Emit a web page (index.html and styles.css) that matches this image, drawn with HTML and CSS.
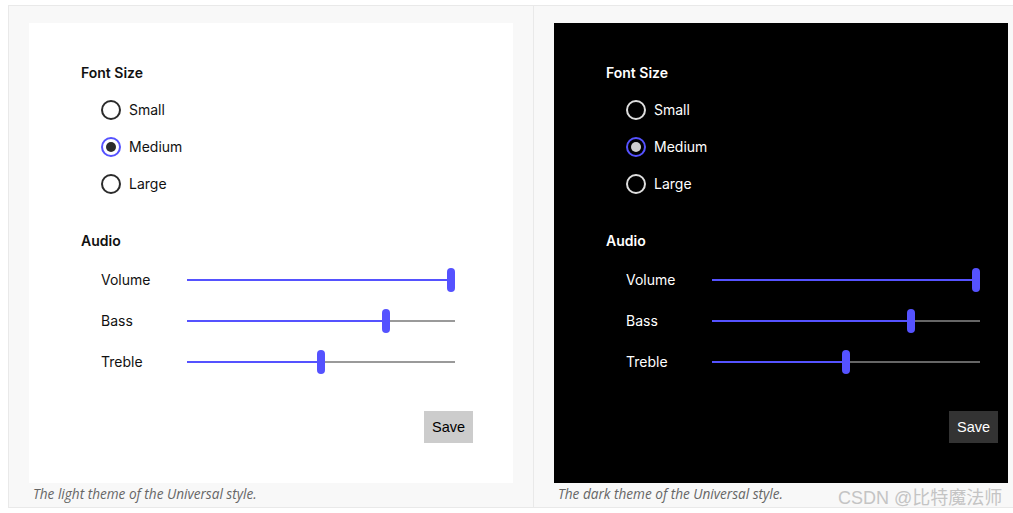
FILE: index.html
```html
<!DOCTYPE html>
<html>
<head>
<meta charset="utf-8">
<link rel="stylesheet" href="styles.css">
</head>
<body>
<div class="figure">
  <div class="col col-light">
    <div class="panel light">
      <div class="heading">Font Size</div>
      <div class="radios">
        <div class="radio-row"><span class="radio"></span><span class="lbl">Small</span></div>
        <div class="radio-row"><span class="radio checked"></span><span class="lbl">Medium</span></div>
        <div class="radio-row"><span class="radio"></span><span class="lbl">Large</span></div>
      </div>
      <div class="heading audio">Audio</div>
      <div class="sliders">
        <div class="slider-row"><span class="slabel">Volume</span><div class="track"><div class="fill" style="width:100%"></div><div class="handle" style="left:260px"></div></div></div>
        <div class="slider-row"><span class="slabel">Bass</span><div class="track"><div class="fill" style="width:75%"></div><div class="handle" style="left:195px"></div></div></div>
        <div class="slider-row"><span class="slabel">Treble</span><div class="track"><div class="fill" style="width:50%"></div><div class="handle" style="left:130px"></div></div></div>
      </div>
      <div class="actions"><button class="save">Save</button></div>
    </div>
    <div class="caption">The light theme of the Universal style.</div>
  </div>
  <div class="col col-dark">
    <div class="panel dark">
      <div class="heading">Font Size</div>
      <div class="radios">
        <div class="radio-row"><span class="radio"></span><span class="lbl">Small</span></div>
        <div class="radio-row"><span class="radio checked"></span><span class="lbl">Medium</span></div>
        <div class="radio-row"><span class="radio"></span><span class="lbl">Large</span></div>
      </div>
      <div class="heading audio">Audio</div>
      <div class="sliders">
        <div class="slider-row"><span class="slabel">Volume</span><div class="track"><div class="fill" style="width:100%"></div><div class="handle" style="left:260px"></div></div></div>
        <div class="slider-row"><span class="slabel">Bass</span><div class="track"><div class="fill" style="width:75%"></div><div class="handle" style="left:195px"></div></div></div>
        <div class="slider-row"><span class="slabel">Treble</span><div class="track"><div class="fill" style="width:50%"></div><div class="handle" style="left:130px"></div></div></div>
      </div>
      <div class="actions"><button class="save">Save</button></div>
    </div>
    <div class="caption">The dark theme of the Universal style.</div>
  </div>
  <div class="watermark">CSDN @比特魔法师</div>
</div>
</body>
</html>
```

FILE: styles.css
```css
html, body {
  margin: 0;
  padding: 0;
  background: #ffffff;
  overflow: hidden;
}
body {
  padding: 5px 0 0 8px;
  width: 1013px;
  height: 513px;
  box-sizing: border-box;
}
.figure {
  position: relative;
  display: flex;
  background: #f8f8f8;
  border: 1px solid #e9e9e9;
  border-right: none;
  width: 1005px;
  box-sizing: border-box;
}
.col {
  padding-top: 17px;
  box-sizing: border-box;
}
.col-light {
  width: 525px;
  padding-left: 20px;
  padding-right: 20px;
  border-right: 1px solid #e9e9e9;
}
.col-dark {
  width: 474px;
  padding-left: 20px;
  overflow: hidden;
}
.panel {
  width: 484px;
  height: 460px;
  box-sizing: border-box;
  padding: 40px 40px 0 52px;
  font-family: "Inter", "Noto Sans", sans-serif;
  font-size: 14px;
  flex-shrink: 0;
}
.light { background: #ffffff; color: #111111; }
.dark { background: #000000; color: #ffffff; }
.heading {
  font-weight: 600;
  line-height: 20px;
  height: 20px;
}
.radios { margin-top: 8px; padding-left: 20px; }
.radio-row {
  height: 37px;
  display: flex;
  align-items: center;
  gap: 8px;
}
.lbl { line-height: 20px; }
.radio {
  width: 20px;
  height: 20px;
  box-sizing: border-box;
  border-radius: 50%;
  border: 2px solid #2b2b2b;
  display: flex;
  align-items: center;
  justify-content: center;
}
.dark .radio { border-color: #dedede; }
.radio.checked { border-color: #5552ff; }
.radio.checked::after {
  content: "";
  width: 10px;
  height: 10px;
  border-radius: 50%;
  background: #2b2b2b;
}
.dark .radio.checked::after { background: #cfcfcf; }
.audio { margin-top: 29px; }
.sliders { margin-top: 8px; padding-left: 20px; }
.slider-row {
  height: 41px;
  display: flex;
  align-items: center;
}
.slabel { width: 86px; line-height: 20px; }
.track {
  position: relative;
  width: 268px;
  height: 2px;
  background: #9a9a9a;
}
.dark .track { background: #666666; }
.fill {
  height: 2px;
  background: #5552ff;
}
.handle {
  position: absolute;
  top: -11px;
  width: 8px;
  height: 24px;
  border-radius: 4px;
  background: #5552ff;
}
.actions {
  margin-top: 29px;
  display: flex;
  justify-content: flex-end;
}
.save {
  width: 49px;
  height: 32px;
  border: none;
  margin: 0;
  padding: 0;
  font-family: "Liberation Sans", Arial, sans-serif;
  font-size: 14.5px;
  background: #cccccc;
  color: #000000;
}
.dark .save { background: #333333; color: #ffffff; }
.caption {
  height: 24px;
  line-height: 22px;
  padding-left: 4px;
  font-family: "Open Sans", sans-serif;
  font-style: italic;
  font-size: 13.6px;
  color: #666666;
}
.watermark {
  position: absolute;
  left: 829px;
  top: 477px;
  font-family: "Liberation Sans", "Noto Sans CJK SC", sans-serif;
  font-size: 18px;
  color: #c4c4c4;
  white-space: nowrap;
}
```
